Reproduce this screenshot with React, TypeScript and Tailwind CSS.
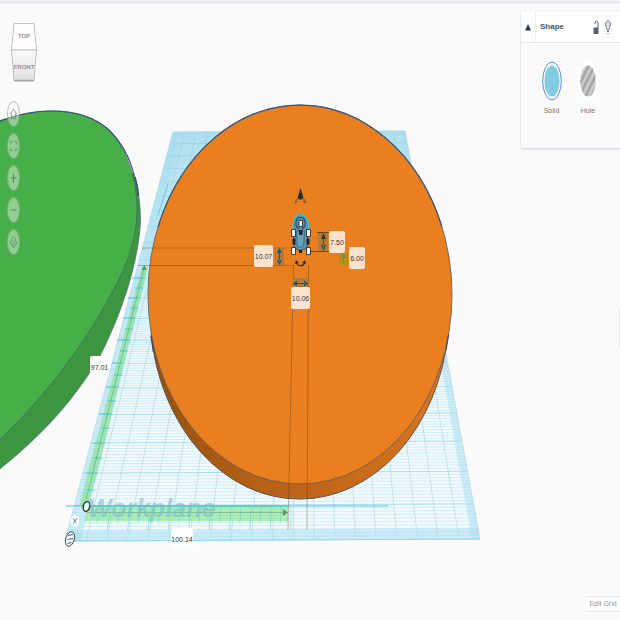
import React, { useState } from "react";

type Point = [number, number];

const FONT = "font-['Liberation_Sans',sans-serif]";

/* Corners of the workplane: back left, back right, front right, front left. */
const BL: Point = [173, 132];
const BR: Point = [405, 131];
const FR: Point = [480, 539];
const FL: Point = [65, 541];
const DEPTH = 1.79;

/* Projects a workplane position (0..1 across, 0..1 towards the viewer). */
function project(u: number, v: number): Point {
  const f = v / (DEPTH * (1 - v) + v);
  const lx = BL[0] + (FL[0] - BL[0]) * f;
  const ly = BL[1] + (FL[1] - BL[1]) * f;
  const rx = BR[0] + (FR[0] - BR[0]) * f;
  const ry = BR[1] + (FR[1] - BR[1]) * f;
  return [lx + (rx - lx) * u, ly + (ry - ly) * u];
}

function quad(u0: number, v0: number, u1: number, v1: number): string {
  return [project(u0, v0), project(u1, v0), project(u1, v1), project(u0, v1)]
    .map((p) => p.join(","))
    .join(" ");
}

function gridPath(steps: number): { rows: string; cols: string } {
  let rows = "";
  let cols = "";
  for (let i = 0; i <= steps; i++) {
    const t = i / steps;
    rows += `M${project(0, t).join(" ")}L${project(1, t).join(" ")}`;
    cols += `M${project(t, 0).join(" ")}L${project(t, 1).join(" ")}`;
  }
  return { rows, cols };
}

const major = gridPath(20);
const minor = gridPath(200);

const sideTicks: Point[] = [
  [278, 0], [288, 1], [298, 0], [308, 1], [318, 0], [329, 1], [340, 0], [351, 1], [363, 0],
  [375, 1], [387, 0], [401, 1], [414, 0], [428, 1], [443, 0], [458, 1], [473, 0], [490, 1],
];

function Workplane() {
  return (
    <g>
      <polygon points={quad(0, 0, 1, 1)} fill="#f6fbfd" />
      <polygon points={quad(0, 0, 1, 0.7)} fill="url(#far)" />
      <path d={minor.rows} stroke="#8fd4ea" strokeOpacity="0.36" strokeWidth="0.900" />
      <path d={minor.cols} stroke="#8fd4ea" strokeOpacity="0.06" strokeWidth="1" />
      <path d={major.rows} stroke="#79cbe4" strokeOpacity="0.5" strokeWidth="0.900" />
      <path d={major.cols} stroke="#8fc4d8" strokeOpacity="0.45" strokeWidth="0.900" />
      <g fill="#a5def0" fillOpacity="0.5">
        <polygon points={quad(0, 0, 0.038, 1)} />
        <polygon points={quad(0.98, 0, 1, 1)} />
        <polygon points={quad(0, 0.985, 1, 1)} />
        <polygon points={quad(0, 0, 1, 0.012)} />
      </g>
      <path d={`M${FL.join(" ")}L${FR.join(" ")}`} stroke="#9ad9ed" />
      <path d="M168 184L158 215" stroke="#6cc7e2" />
    </g>
  );
}

function Ruler() {
  return (
    <g>
      <polygon points="142,267 148,267 97,473 88,506 79,506" fill="#7fe38c" fillOpacity="0.62" />
      <polygon points="88,506 288,506 288,521 84,521" fill="#8be895" fillOpacity="0.68" />
      {sideTicks.map(([y, half]) => {
        const x = 145 - (y - 267) * 0.24;
        return (
          <path
            key={y}
            d={half ? `M${x - 5} ${y}H${x + 3}` : `M${x - 10} ${y}H${x + 2}`}
            stroke="#42c5dc"
            strokeWidth="1"
          />
        );
      })}
      {Array.from({ length: 20 }, (_, i) => (
        <path
          key={i}
          d={`M${101 + i * 10} 506l${-4 + i * 0.2} ${i % 2 ? 24 : 17}`}
          stroke="#62c9cf"
          strokeOpacity="0.65"
          strokeWidth="0.800"
        />
      ))}
      <path d="M66 506H388" stroke="#54c3df" strokeWidth="1" />
      <path d="M90 506H288" stroke="#3fca98" strokeWidth="1" />
      <path d="M86 512.500H284M86 500L144 268" stroke="#5e8d63" strokeWidth="1" strokeOpacity="0.5" />
      <path d="M283 509l5 3.500-5 3.500zM141.500 270l3-5 2 5z" fill="#5c9566" />
      <ellipse cx="86.500" cy="506.500" rx="3.200" ry="5" transform="rotate(14 86.500 506.500)" fill="#e9fbf3" stroke="#252f34" strokeWidth="1.400" />
      <ellipse cx="75" cy="521" rx="4.500" ry="6" fill="#fff" fillOpacity="0.85" />
      <path d="M73.500 518.500l2.500 4.500M77 518l-4 5.500" stroke="#566" strokeWidth="0.800" />
      <ellipse cx="70" cy="539" rx="4.300" ry="7.500" transform="rotate(16 70 539)" fill="#eef8fb" stroke="#414a50" strokeWidth="0.900" />
      <path d="M68 535.500l5-1M67.500 539.500l5.500-1M67.500 543.500l4-1" stroke="#414a50" strokeWidth="0.900" />
    </g>
  );
}

function GreenDisc() {
  return (
    <g strokeLinejoin="round">
      <path
        d="M-3 121L134 174C138 186 140.500 204 140.500 222C138 262 124 308 100 356C78 394 46 433 -3 471Z"
        fill="#3b963f"
        stroke="#54717a"
        strokeWidth="0.800"
      />
      <path
        d="M-3 122C18 114 35 111 52 111C76 111 96 118 109 130C128 149 138 184 137 215C136 238 128 262 117 283C112 293 106 304 100 314C74 358 38 404 -3 442Z"
        fill="#46af48"
        stroke="#42686b"
        strokeWidth="0.800"
      />
      <path d="M-3 122C18 114 35 111 52 111C76 111 96 118 109 130C121 142 130 158 134 175" fill="none" stroke="#34507c" strokeWidth="1.100" />
      <path d="M135 177C137 184 138 190 138.500 196" fill="none" stroke="#34507c" strokeWidth="1.500" />
    </g>
  );
}

function OrangeDisc() {
  return (
    <g>
      <path d="M151 334A149.700 189 0 0 0 448 334Z" fill="url(#rim)" stroke="#4d4c4c" strokeWidth="0.900" />
      <ellipse cx="300" cy="294.500" rx="152" ry="189.500" fill="#ea7f1f" stroke="#66605b" strokeWidth="0.900" />
      <path d="M158 227A152 189.500 0 0 1 442 227" fill="none" stroke="#3f567a" strokeWidth="1.200" />
      <path d="M151 336L153.500 352M448.500 335L446 350" stroke="#3e5069" strokeWidth="1.300" />
    </g>
  );
}

function Model() {
  return (
    <g>
      <path d="M142 248H287M138 265.500H293M293.500 265L288 530M308.500 265L307 530" stroke="#4d3417" strokeOpacity="0.5" strokeWidth="0.700" fill="none" />
      <path d="M317 232.500H329M309 251.500H329" stroke="#4d3417" strokeWidth="0.800" />
      <g fill="#a97a3c" fillOpacity="0.85">
        <path d="M275 248h9v17h-9zM318 233h10v18h-10zM293 278h15v11h-15z" />
      </g>
      <path d="M339 252h9v13h-9z" fill="#b3931a" />
      <path d="M343.500 252l2.500 6h-5zM343 258h1v6h-1z" fill="#7d8763" />
      <g fill="#255269">
        <path d="M279.500 248l2.500 5h-5zM279.500 265l2.500-5h-5zM279 252h1v9h-1z" />
        <path d="M293 283.500l4-3v6zM308 283.500l-4-3v6zM296 283h9v1h-9z" />
        <path d="M323.500 251l2.500-6h-5zM323 239h1v8h-1z" />
      </g>
      <path d="M323.500 233l2.500 6h-5z" fill="#343332" />
      <path d="M300.500 188l3 10-3 2-3-2z" fill="#27313a" />
      <path d="M298.500 198.500l-2.500 1.500-.500 3 2.500-2M302.500 198.500l2.500 1.500 .500 3-2.500-2" stroke="#71512d" strokeWidth="1" fill="none" />
      <path d="M296.500 262c1 5 7 5 8.500 0" fill="none" stroke="#302b27" strokeWidth="1.200" />
      <path d="M295 264l1-4 3 3zM306 264l-1-4-3 3z" fill="#302b27" />
      <path d="M294 226C294 212 307.500 212 307.500 226V245C307 249 303 250 300.500 250C298 250 294 249 294 245Z" fill="#5c93ae" stroke="#26566d" strokeWidth="1" />
      <path d="M293.500 229C291.500 210 309.500 210 308 229" fill="none" stroke="#22c8ed" strokeWidth="1.700" />
      <path d="M297 219c-2 4-1 8 2 10M304 219c2 4 1 8-2 10M296.500 219q4-3 8 0" fill="none" stroke="#254859" strokeWidth="1.200" />
      <path d="M296.500 231l1 16h6l1-16z" fill="#6aa1bb" stroke="#315b73" strokeWidth="0.700" />
      <path d="M292.500 238.500h3v6h-3zM306.500 238.500h3v6h-3zM299 230h3.500v5h-3.500zM299 250h3v3h-3z" fill="#20262c" />
      <path d="M299 220.500h3.500v6h-3.500zM291.500 229.500h4v7h-4zM306.500 229.500h4v7h-4zM291.500 247.500h4v7h-4zM306.500 247.500h4v7h-4z" fill="#f4f4f2" stroke="#273039" strokeWidth="0.900" />
    </g>
  );
}

type Dimension = { label: string; value: string; x: number; y: number; w: number; tint: string };

const dimensions: Dimension[] = [
  { label: "Distance along Y", value: "10.07", x: 254, y: 245, w: 19, tint: "bg-[#fde2cd]" },
  { label: "Length", value: "7.50", x: 329, y: 231, w: 16, tint: "bg-[#fde2cd]" },
  { label: "Elevation", value: "6.00", x: 349, y: 247, w: 16, tint: "bg-[#fde2cd]" },
  { label: "Width", value: "10.06", x: 291, y: 287, w: 19, tint: "bg-[#fde2cd]" },
  { label: "Ruler offset Y", value: "97.01", x: 90, y: 356, w: 19, tint: "bg-[#fbfdfb]" },
  { label: "Ruler offset X", value: "100.14", x: 171, y: 528, w: 22, tint: "bg-[#fcfeff]" },
];

function Scene() {
  return (
    <svg viewBox="0 0 620 620" className="absolute inset-0 h-full w-full" preserveAspectRatio="xMidYMid meet" fill="none">
      <defs>
        <linearGradient id="far" x1="0" y1="0" x2="0" y2="1">
          <stop offset="0" stopColor="#bfe6f3" />
          <stop offset="1" stopColor="#d5f0f8" stopOpacity="0" />
        </linearGradient>
        <linearGradient id="rim" x1="0" y1="0" x2="1" y2="0">
          <stop offset="0" stopColor="#96500f" />
          <stop offset="0.350" stopColor="#b46017" />
          <stop offset="0.700" stopColor="#c96b19" />
          <stop offset="1" stopColor="#d97620" />
        </linearGradient>
      </defs>
      <Workplane />
      <Ruler />
      <text x="88" y="517" fill="#78bfd0" fillOpacity="0.65" className={`${FONT} text-[25px] font-bold italic`}>
        Workplane
      </text>
      <GreenDisc />
      <OrangeDisc />
      <Model />
      {dimensions.map((d) => (
        <foreignObject key={d.label} x={d.x} y={d.y} width={d.w} height={22}>
          <input
            aria-label={d.label}
            defaultValue={d.value}
            className={`block h-[22px] w-full rounded-[2px] p-0 text-center text-[7px] text-[#363636] outline-none ${FONT} ${d.tint}`}
          />
        </foreignObject>
      ))}
    </svg>
  );
}

function ViewCube() {
  return (
    <div className="relative ml-[11px] h-[59px] w-[26px]">
      <svg viewBox="0 0 26 59" className="absolute inset-0 h-full w-full">
        <defs>
          <linearGradient id="front" x1="0" y1="0" x2="0" y2="1">
            <stop offset="0" stopColor="#fbfbfb" />
            <stop offset="1" stopColor="#dedede" />
          </linearGradient>
        </defs>
        <path d="M3 .500H23L25.500 27H.500Z" fill="#fefefe" stroke="#b5b5b8" strokeWidth="0.800" />
        <path d="M.500 27H25.500L23 58H3Z" fill="url(#front)" stroke="#b5b5b8" strokeWidth="0.800" />
        <path d="M3 57.500H23" stroke="#a6a6aa" strokeWidth="1.500" />
      </svg>
      <div className={`relative flex h-full flex-col text-[6px] font-bold text-[#92949d] ${FONT}`}>
        <button className="h-[26px] w-full">TOP</button>
        <button className="h-[33px] w-full pt-1">FRONT</button>
      </div>
    </div>
  );
}

const tools: { label: string; icon: React.ReactNode }[] = [
  { label: "Home view", icon: <path d="M2.500 13L6 8L9.500 13H8V18H4V13Z" /> },
  { label: "Fit view", icon: <path d="M3 11V8H5M7 8H9V11M9 15V18H7M5 18H3V15" /> },
  { label: "Zoom in", icon: <path d="M3 13H9M6 8.500V17.500" strokeWidth="1.100" /> },
  { label: "Zoom out", icon: <path d="M3 13H9" strokeWidth="1.200" /> },
  { label: "Orthographic view", icon: <path d="M6 7L8 9V12L6 14L4 12V9ZM2.500 12V15L6 19L9.500 15V12M4 14.500L6 17L8 14.500" /> },
];

function ViewTools() {
  return (
    <nav aria-label="View" className="ml-[7px] mt-[19px] flex flex-col items-start gap-1.5">
      {tools.map((t) => (
        <button
          key={t.label}
          aria-label={t.label}
          className="h-[26px] w-[13px] rounded-[50%] border border-[#6f8c70]/50 bg-white/40"
        >
          <svg viewBox="0 1 12 24" className="h-6 w-[11px]" fill="none" stroke="#4f7251" strokeOpacity="0.8" strokeWidth="0.800">
            {t.icon}
          </svg>
        </button>
      ))}
    </nav>
  );
}

function ShapePanel() {
  const [kind, setKind] = useState("solid");
  return (
    <aside className="mt-[9px] h-[136px] w-[99px] bg-[#fafafa] shadow-[0_1px_2px_#c7cad6]">
      <header className="flex h-[31px] items-center border-b border-[#e4e6ea] bg-white">
        <button aria-label="Collapse" className="flex h-full w-[15px] items-center justify-center border-r border-[#eeeff3]">
          <svg viewBox="0 0 6 7" className="h-[7px] w-1.5">
            <path d="M3 0L6 6.500H0Z" fill="#26394f" />
          </svg>
        </button>
        <h2 className={`ml-1 flex-1 text-[8px] font-bold text-[#45546a] ${FONT}`}>Shape</h2>
        <button aria-label="Lock" className="mr-1.5">
          <svg viewBox="0 0 6 15" className="h-[15px] w-1.5" fill="none">
            <path d="M2 4V3Q2 1 3.500 1Q5 1 5 3V8" stroke="#566377" strokeWidth="1" />
            <path d="M0.500 7.500H5.500V14H0.500Z" fill="#566377" />
          </svg>
        </button>
        <button aria-label="Visibility" className="mr-[9px]">
          <svg viewBox="0 0 6 15" className="h-[15px] w-1.5" fill="none">
            <path d="M2 10C2 8 .500 7 .500 4.500C.500 2 1.500 .700 3 .700S5.500 2 5.500 4.500C5.500 7 4 8 4 10Z" fill="#d9dde3" stroke="#64748a" strokeWidth="0.900" />
            <path d="M2 11.500H4M2.500 13.500H3.500" stroke="#56657a" strokeWidth="1" />
          </svg>
        </button>
      </header>
      <div role="radiogroup" aria-label="Shape kind" className={`flex pl-3 pt-[18px] text-[7px] text-[#6f7681] ${FONT}`}>
        <label className="flex w-[37px] flex-col items-center gap-[5px]">
          <input type="radio" name="kind" className="sr-only" checked={kind === "solid"} onChange={() => setKind("solid")} />
          <svg viewBox="0 0 20 40" className="h-10 w-5">
            <ellipse cx="10" cy="20" rx="9.300" ry="19" fill="#fff" stroke="#4e8edb" strokeWidth="1" />
            <ellipse cx="10" cy="20" rx="7.600" ry="15.500" fill="#82cbe3" />
          </svg>
          <span>Solid</span>
        </label>
        <label className="flex w-9 flex-col items-center gap-[5px]">
          <input type="radio" name="kind" className="sr-only" checked={kind === "hole"} onChange={() => setKind("hole")} />
          <svg viewBox="0 0 20 40" className="h-10 w-5">
            <defs>
              <clipPath id="hole">
                <ellipse cx="10" cy="20" rx="7.700" ry="15.500" />
              </clipPath>
            </defs>
            <ellipse cx="10" cy="20" rx="9.500" ry="19" fill="#fff" />
            <g clipPath="url(#hole)">
              <path d="M0 0H20V40H0Z" fill="#cacaca" />
              <path d="M-2 18L14 -14M-2 30L18 -10M-2 42L22 -6M0 50L24 2M6 50L26 10" stroke="#a6a6a6" strokeWidth="2.600" />
            </g>
          </svg>
          <span>Hole</span>
        </label>
      </div>
    </aside>
  );
}

export default function App() {
  return (
    <div className="relative flex min-h-screen flex-col overflow-hidden bg-[#fafafa]">
      <Scene />
      <div className="relative h-[3px] border-b border-[#e1e2ec] bg-[#f1f1f4]" />
      <main className="pointer-events-none relative flex flex-1 items-start justify-between *:pointer-events-auto">
        <div className="pt-5">
          <ViewCube />
          <ViewTools />
        </div>
        <ShapePanel />
      </main>
      <div className="pointer-events-none absolute right-0 top-1/2 h-9 w-px bg-[#e5e5e8]" />
      <footer className="relative flex justify-end pb-2">
        <button className={`h-4 w-[34px] border-y border-[#e7e9f2] bg-white text-[7px] text-[#8f98a5] ${FONT}`}>Edit Grid</button>
      </footer>
    </div>
  );
}
